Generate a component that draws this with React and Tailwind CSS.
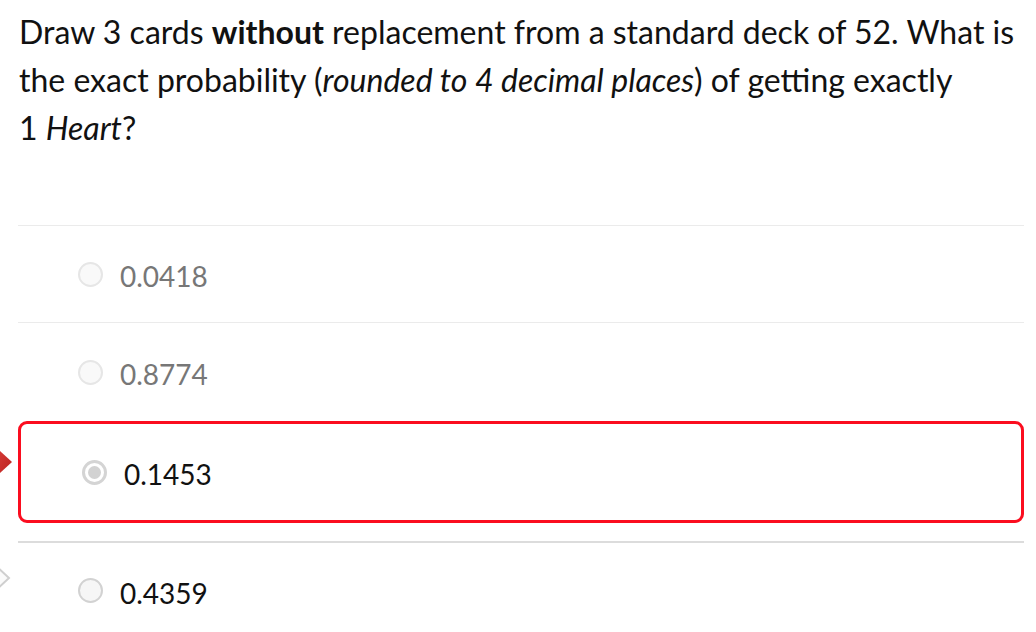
import React from "react";

function Radio({ selected, dim }) {
  if (selected) {
    return (
      <span className="flex h-[25px] w-[25px] shrink-0 items-center justify-center rounded-full border-[3px] border-[#d4d4d4] bg-white">
        <span className="h-[13px] w-[13px] rounded-full bg-[#d2d2d2]" />
      </span>
    );
  }
  return (
    <span
      className={
        dim
          ? "h-[25px] w-[25px] shrink-0 rounded-full border-2 border-[#e6e6e6] bg-[#f9f9f9]"
          : "h-[25px] w-[25px] shrink-0 rounded-full border-2 border-[#d2d2d2] bg-[#f6f6f6]"
      }
    />
  );
}

export default function App() {
  return (
    <div
      className="relative h-[632px] w-[1036px] overflow-hidden bg-white text-black"
      style={{ fontFamily: "Lato, 'Open Sans', sans-serif" }}
    >
      <div className="whitespace-nowrap pl-[19px] pt-[8px] text-[32px] leading-[48px] text-[#111]">
        <div>
          Draw 3 cards <b className="font-bold">without</b> replacement from a standard deck of 52. What is
        </div>
        <div>
          the exact probability (<i>rounded to 4 decimal places</i>) of getting exactly
        </div>
        <div>
          1 <i>Heart</i>?
        </div>
      </div>

      <div className="ml-[18px] mt-[73px] w-[1006px]">
        <div className="flex h-[97px] items-center gap-[17px] border-t border-[#ebebeb] pl-[60px] text-[28px] text-[#777]">
          <Radio dim />
          <span className="pt-[4px]">0.0418</span>
        </div>
        <div className="flex h-[99px] items-center gap-[17px] border-t border-[#ebebeb] pl-[60px] text-[28px] text-[#777]">
          <Radio dim />
          <span className="pt-[4px]">0.8774</span>
        </div>
        <div className="flex h-[102px] items-center gap-[17px] rounded-[9px] border-[3px] border-[#fb0d1f] pl-[61px] text-[28px] text-[#111]">
          <Radio selected />
          <span className="pt-[4px]">0.1453</span>
        </div>
        <div className="mt-[18px] flex h-[97px] items-center gap-[17px] border-t-2 border-[#dcdcdc] pl-[60px] text-[28px] text-[#111]">
          <Radio />
          <span className="pt-[4px]">0.4359</span>
        </div>
      </div>

      <svg className="absolute left-0 top-[440px]" width="14" height="44" viewBox="0 0 14 44">
        <defs>
          <linearGradient id="rg" x1="0" y1="0" x2="1" y2="1">
            <stop offset="0" stopColor="#e0443f" />
            <stop offset="1" stopColor="#b8201d" />
          </linearGradient>
        </defs>
        <polygon points="-10,2 12,22 -10,42" fill="url(#rg)" />
      </svg>
      <svg className="absolute left-0 top-[560px]" width="14" height="36" viewBox="0 0 14 36">
        <polygon points="-8,2 9,18 -8,34" fill="#fafafa" stroke="#cfcfcf" strokeWidth="2" />
      </svg>
    </div>
  );
}
